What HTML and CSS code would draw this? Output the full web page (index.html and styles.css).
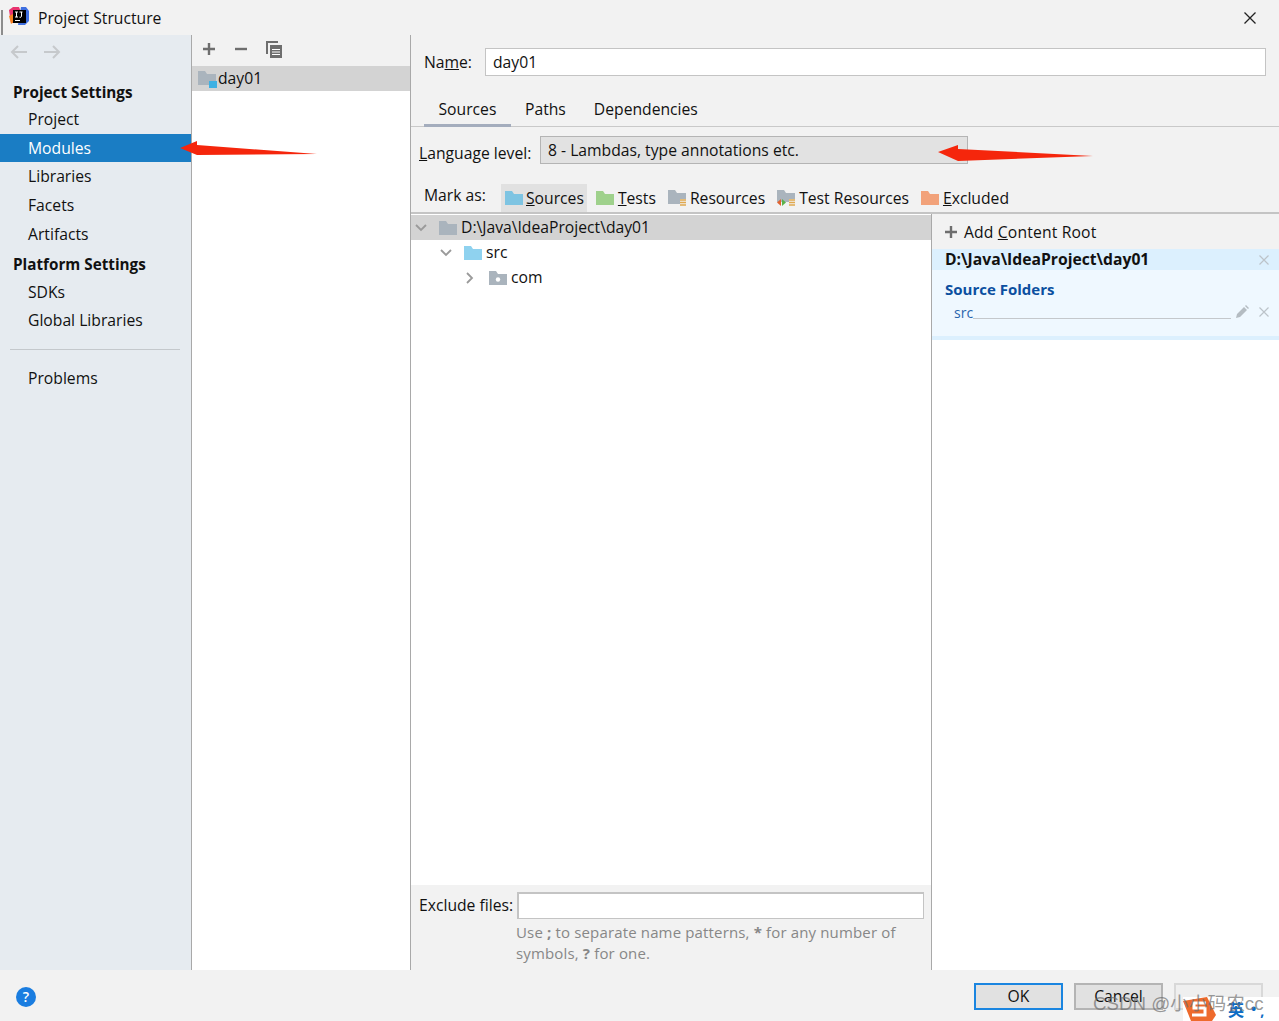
FILE: index.html
```html
<!DOCTYPE html>
<html lang="en">

<head>
  <title>Project Structure</title>
  <link rel="stylesheet" href="styles.css">
</head>

<body>
  <div class="window">

    <header class="titlebar">
      <span class="edge"></span>
      <svg class="logo" width="22" height="22" viewBox="0 0 22 22">
        <path d="M1 4 5 1h6l2 5-6 11H3z" fill="#e8336f" />
        <path d="M1 10l4-2 2 7-4 3z" fill="#f58220" />
        <path d="M13 1h5l3 4v10l-4 4h-7z" fill="#3f6fe0" />
        <rect x="5" y="4" width="13" height="13" fill="#000" />
        <rect x="7" y="14" width="5" height="1" fill="#fff" />
        <path d="M7 6h3M8.500 6v5M7 11h3M11.500 6h3M13.500 6v4.500q0 1-2 .7" fill="none" stroke="#fff" stroke-width="1" />
      </svg>
      <span class="title">Project Structure</span>
      <svg class="close" width="12" height="12" viewBox="0 0 12 12">
        <path d="M.5.500l11 11M11.500.500l-11 11" stroke="#222" stroke-width="1.300" />
      </svg>
    </header>

    <div class="main">

      <nav class="sidebar">
        <div class="history">
          <svg width="18" height="14" viewBox="0 0 18 14">
            <path d="M17 7H2M8 1 2 7l6 6" fill="none" stroke="#c6c9cc" stroke-width="2" />
          </svg>
          <svg width="18" height="14" viewBox="0 0 18 14">
            <path d="M1 7h15M10 1l6 6-6 6" fill="none" stroke="#c6c9cc" stroke-width="2" />
          </svg>
        </div>
        <h3 class="nav-head">Project Settings</h3>
        <a class="nav-item">Project</a>
        <a class="nav-item active">Modules</a>
        <a class="nav-item">Libraries</a>
        <a class="nav-item">Facets</a>
        <a class="nav-item">Artifacts</a>
        <h3 class="nav-head platform">Platform Settings</h3>
        <a class="nav-item short">SDKs</a>
        <a class="nav-item short">Global Libraries</a>
        <hr class="nav-rule">
        <a class="nav-item">Problems</a>
      </nav>

      <section class="modules">
        <div class="toolbar">
          <svg width="14" height="14" viewBox="0 0 14 14">
            <path d="M7 1v12M1 7h12" stroke="#6e6e6e" stroke-width="2.400" />
          </svg>
          <svg width="14" height="14" viewBox="0 0 14 14">
            <path d="M1 7h12" stroke="#6e6e6e" stroke-width="2.400" />
          </svg>
          <svg width="16" height="17" viewBox="0 0 16 17">
            <path d="M1 13V1h11" fill="none" stroke="#6e6e6e" stroke-width="2" />
            <rect x="4" y="4" width="12" height="13" fill="#6e6e6e" />
            <path d="M6 8.500h8M6 11h8M6 13.500h8" stroke="#fff" stroke-width="1" />
          </svg>
        </div>
        <div class="module-row">
          <svg width="20" height="18" viewBox="0 0 20 18">
            <path d="M1 1h7l2 3h9v11H1z" fill="#aab4bd" />
            <rect x="12" y="11" width="8" height="7" fill="#3fb1e3" />
          </svg>
          <span>day01</span>
        </div>
      </section>

      <section class="detail">
        <div class="name-row">
          <label>Na<u>m</u>e:</label>
          <div class="field">day01</div>
        </div>

        <div class="tabs">
          <span class="tab current">Sources</span>
          <span class="tab">Paths</span>
          <span class="tab">Dependencies</span>
        </div>

        <div class="level-row">
          <label><u>L</u>anguage level:</label>
          <div class="combo">8 - Lambdas, type annotations etc.</div>
        </div>

        <div class="mark-row">
          <span class="mark-label">Mark as:</span>
          <span class="mark pressed">
            <svg width="18" height="14" viewBox="0 0 18 14"><path d="M0 0h7l2 3h9v11H0z" fill="#7ec4e2" /></svg>
            <span><u>S</u>ources</span>
          </span>
          <span class="mark">
            <svg width="18" height="14" viewBox="0 0 18 14"><path d="M0 0h7l2 3h9v11H0z" fill="#9fd18c" /></svg>
            <span><u>T</u>ests</span>
          </span>
          <span class="mark">
            <svg width="18" height="18" viewBox="0 0 18 18">
              <path d="M0 1h7l2 3h9v6h-6v5H0z" fill="#aab4bd" />
              <path d="M12 11h6M12 13.500h6M12 16h6" stroke="#e0a94f" stroke-width="1.500" />
            </svg>
            <span>Resources</span>
          </span>
          <span class="mark">
            <svg width="18" height="18" viewBox="0 0 18 18">
              <path d="M0 1h7l2 3h9v6h-6v3H0z" fill="#aab4bd" />
              <path d="M4 10v7l-4-3.500z" fill="#e2622f" />
              <path d="M5 10v7l4-3.500z" fill="#5bb24a" />
              <path d="M12 11h6M12 13.500h6M12 16h6" stroke="#e0a94f" stroke-width="1.500" />
            </svg>
            <span>Test Resources</span>
          </span>
          <span class="mark">
            <svg width="18" height="14" viewBox="0 0 18 14"><path d="M0 0h7l2 3h9v11H0z" fill="#f2a27a" /></svg>
            <span><u>E</u>xcluded</span>
          </span>
        </div>

        <div class="split">
          <div class="tree-pane">
            <ul class="tree">
              <li class="tree-row selected">
                <svg class="chevron" width="12" height="8" viewBox="0 0 12 8"><path d="M1 1l5 5 5-5" fill="none" stroke="#9a9a9a" stroke-width="1.800" /></svg>
                <svg width="18" height="14" viewBox="0 0 18 14"><path d="M0 0h7l2 3h9v11H0z" fill="#aab4bd" /></svg>
                <span>D:\Java\IdeaProject\day01</span>
              </li>
              <li class="tree-row depth1">
                <svg class="chevron" width="12" height="8" viewBox="0 0 12 8"><path d="M1 1l5 5 5-5" fill="none" stroke="#9a9a9a" stroke-width="1.800" /></svg>
                <svg width="18" height="14" viewBox="0 0 18 14"><path d="M0 0h7l2 3h9v11H0z" fill="#8fd2ef" /></svg>
                <span>src</span>
              </li>
              <li class="tree-row depth2">
                <svg class="chevron" width="12" height="12" viewBox="0 0 12 12"><path d="M3 1l5 5-5 5" fill="none" stroke="#9a9a9a" stroke-width="1.800" /></svg>
                <svg width="18" height="14" viewBox="0 0 18 14">
                  <path d="M0 0h7l2 3h9v11H0z" fill="#aab4bd" />
                  <circle cx="9" cy="8.500" r="2.200" fill="#fff" />
                </svg>
                <span>com</span>
              </li>
            </ul>
            <div class="exclude">
              <div class="exclude-row">
                <label>Exclude files:</label>
                <div class="field inset"></div>
              </div>
              <p class="hint">Use <b>;</b> to separate name patterns, <b>*</b> for any number of<br>symbols, <b>?</b> for one.</p>
            </div>
          </div>

          <aside class="roots">
            <div class="add-root">
              <svg width="14" height="14" viewBox="0 0 14 14"><path d="M7 1v12M1 7h12" stroke="#6e6e6e" stroke-width="2.400" /></svg>
              <span>Add <u>C</u>ontent Root</span>
            </div>
            <div class="root-head">
              <span>D:\Java\IdeaProject\day01</span>
              <svg width="10" height="10" viewBox="0 0 10 10"><path d="M.5.500l9 9M9.500.500l-9 9" stroke="#bcc3c9" stroke-width="1.200" /></svg>
            </div>
            <div class="root-body">
              <h4>Source Folders</h4>
              <div class="folder-row">
                <span class="folder-name">src</span>
                <span class="leader"></span>
                <svg width="14" height="14" viewBox="0 0 14 14">
                  <path d="M1 13l1-4 7-7 3 3-7 7zM10 1l1-1 3 3-1 1z" fill="#b4bcc2" />
                </svg>
                <svg width="10" height="10" viewBox="0 0 10 10"><path d="M.5.500l9 9M9.500.500l-9 9" stroke="#bcc3c9" stroke-width="1.200" /></svg>
              </div>
            </div>
          </aside>
        </div>
      </section>
    </div>

    <footer class="footer">
      <span class="help">?</span>
      <div class="actions">
        <button type="button" class="btn primary">OK</button>
        <button type="button" class="btn">Cancel</button>
        <button type="button" class="btn disabled"></button>
      </div>
    </footer>

    <!-- red arrows drawn on top of the screenshot -->
    <svg class="arrow arrow-modules" width="138" height="16" viewBox="0 0 138 16">
      <path d="M0 7 17 0v4l120 9L17 14z" fill="#f5260c" />
    </svg>
    <svg class="arrow arrow-level" width="156" height="17" viewBox="0 0 156 17">
      <path d="M0 7 20 0v4l135 7L20 16z" fill="#f5260c" />
    </svg>

    <!-- watermark + IME badge -->
    <div class="ime">
      <svg width="34" height="24" viewBox="0 0 34 24">
        <path d="M0 4 24 0l9 18-4 6H8z" fill="#ee6a2c" />
        <path d="M23 6H11v5h11v7H9" fill="none" stroke="#fff" stroke-width="3" />
      </svg>
      <span class="ime-lang">英</span>
      <span class="ime-dot">•</span>
      <span class="ime-comma">,</span>
    </div>
    <span class="watermark">CSDN @小小码农cc</span>
  </div>
</body>

</html>
```

FILE: styles.css
```css
* {
  box-sizing: border-box;
}

html,
body {
  margin: 0;
  padding: 0;
}

body {
  font-family: "Open Sans", "Noto Sans", "Noto Sans CJK SC", sans-serif;
  font-size: 15.700px;
  color: #111;
}

svg {
  flex: none;
  display: block;
}

label {
  white-space: nowrap;
}

.window {
  position: relative;
  display: flex;
  flex-flow: column;
  width: 1279px;
  height: 1021px;
  overflow: hidden;
  background-color: #f2f2f2;
}

/* title bar */
.titlebar {
  display: flex;
  align-items: center;
  flex: none;
  height: 35px;
  padding-right: 23px;
}

.edge {
  align-self: flex-end;
  width: 2px;
  height: 25px;
  margin-left: 1px;
  background-color: #8c8c8c;
}

.logo {
  margin-left: 5px;
  margin-top: -1px;
}

.title {
  flex: 1;
  margin-left: 8px;
}

.main {
  display: flex;
  flex: 1;
  min-height: 0;
}

/* left nav */
.sidebar {
  display: flex;
  flex-flow: column;
  flex: none;
  width: 192px;
  border-right: 1px solid #a9a9a9;
  background-color: #e6ebf0;
}

.history {
  display: flex;
  gap: 15px;
  height: 43px;
  padding: 10px 0 0 10px;
}

.nav-head {
  height: 27px;
  margin: 0;
  padding-left: 13px;
  font-size: 15.250px;
  font-weight: 700;
  line-height: 28px;
}

.nav-head.platform {
  height: 28px;
  margin-top: 2px;
}

.nav-item {
  height: 28.700px;
  padding-left: 28px;
  line-height: 28px;
}

.nav-item.short {
  height: 28px;
}

.nav-item.active {
  background-color: #1a7dc4;
  color: #fff;
}

.nav-rule {
  width: 170px;
  margin: 15px 0 14px 10px;
  border: 0;
  border-top: 1px solid #c4c8cc;
}

/* module list */
.modules {
  flex: none;
  width: 219px;
  border-right: 1px solid #a9a9a9;
  background-color: #fff;
}

.toolbar {
  display: flex;
  align-items: center;
  gap: 18px;
  height: 31px;
  padding: 0 0 3px 10px;
  background-color: #f2f2f2;
}

.module-row {
  display: flex;
  align-items: center;
  gap: 1px;
  height: 25px;
  padding-left: 5px;
  background-color: #d3d3d3;
  line-height: 23px;
}

/* detail */
.detail {
  display: flex;
  flex-flow: column;
  flex: 1;
  min-width: 0;
}

.name-row {
  display: flex;
  align-items: center;
  gap: 14px;
  height: 54px;
  padding: 0 13px;
}

.name-row label {
  width: 47px;
}

.field {
  flex: 1;
  height: 28px;
  border: 1px solid #c4c4c4;
  padding-left: 7px;
  background-color: #fff;
  line-height: 26px;
}

.tabs {
  display: flex;
  height: 31px;
  margin-top: 7px;
  padding-left: 13px;
  border-bottom: 1px solid #c9c9c9;
}

.tab {
  height: 31px;
  padding: 0 14px;
  line-height: 26px;
}

.tab.current {
  width: 87px;
  padding: 0 14.500px;
  border-bottom: 3px solid #a4adbd;
}

.level-row {
  display: flex;
  gap: 8px;
  height: 37px;
  padding: 9px 0 0 8px;
}

.level-row label {
  width: 113px;
  margin-top: 3px;
  line-height: 28px;
}

.combo {
  width: 428px;
  height: 28px;
  border: 1px solid #b4b4b4;
  padding-left: 7px;
  background-color: #e2e2e2;
  line-height: 26px;
}

.mark-row {
  display: flex;
  align-items: center;
  height: 50px;
  padding: 20px 0 0 13px;
  border-bottom: 2px solid #c4c4c4;
}

.mark-label {
  width: 77px;
  margin-top: -6px;
}

.mark {
  display: flex;
  align-items: center;
  gap: 4px;
  height: 28px;
  margin-right: 5px;
  padding: 0 3px 0 4px;
  white-space: nowrap;
}

.mark.pressed {
  gap: 3px;
  background-color: #e1e1e1;
}

/* content roots */
.split {
  display: flex;
  flex: 1;
  min-height: 0;
}

.tree-pane {
  display: flex;
  flex-flow: column;
  flex: none;
  width: 521px;
  border-right: 1px solid #a9a9a9;
}

.tree {
  flex: 1;
  margin: 0;
  padding: 1px 0 0;
  list-style-type: '';
  background-color: #fff;
}

.tree-row {
  display: flex;
  align-items: center;
  gap: 4px;
  height: 25px;
  padding-left: 4px;
}

.tree-row span {
  margin-top: -2px;
}

.tree-row .chevron {
  margin-right: 8px;
}

.tree-row.selected {
  background-color: #d3d3d3;
}

.tree-row.depth1 {
  padding-left: 29px;
}

.tree-row.depth2 {
  padding-left: 53px;
}

.tree-row.depth2 .chevron {
  margin-right: 9px;
}

.exclude {
  flex: none;
  height: 85px;
  padding: 7px 7px 0 8px;
}

.exclude-row {
  display: flex;
  align-items: center;
  gap: 6px;
}

.exclude-row label {
  width: 92px;
  margin-top: -1px;
}

.field.inset {
  height: 27px;
  border-width: 2px 1px 1px 2px;
}

.hint {
  width: 400px;
  margin: 3px 0 0 97px;
  color: #878787;
  font-size: 15px;
  letter-spacing: .15px;
  line-height: 21px;
}

.roots {
  flex: 1;
  background-color: #fff;
}

.add-root {
  display: flex;
  align-items: center;
  gap: 6px;
  height: 35px;
  padding-left: 12px;
  background-color: #f2f2f2;
  letter-spacing: .15px;
}

.root-head {
  display: flex;
  justify-content: space-between;
  align-items: center;
  height: 21px;
  padding: 0 10px 0 13px;
  background-color: #dcf0fe;
  font-weight: 700;
}

.root-head span {
  margin-top: -2px;
}

.root-body {
  height: 70px;
  border-bottom: 4px solid #dcf0fe;
  padding: 0 10px 0 13px;
  background-color: #eff8ff;
}

.root-body h4 {
  margin: 0;
  padding-top: 8px;
  color: #0b4fa0;
  font-size: 15px;
  line-height: 22px;
}

.folder-row {
  display: flex;
  align-items: center;
  gap: 4px;
  height: 24px;
  padding-left: 9px;
  color: #2a65ad;
  font-size: 14px;
}

.folder-name {
  margin-right: -4px;
}

.leader {
  flex: 1;
  align-self: flex-end;
  margin-bottom: 5px;
  border-bottom: 1px solid #c4c8cc;
}

.folder-row svg:last-child {
  margin-left: 6px;
}

/* footer */
.footer {
  display: flex;
  justify-content: space-between;
  align-items: center;
  flex: none;
  height: 51px;
  padding: 0 16px;
}

.help {
  display: block;
  width: 20px;
  height: 20px;
  margin-top: 3px;
  border-radius: 50%;
  background-color: #1a7de0;
  color: #fff;
  font-size: 14px;
  font-weight: 600;
  line-height: 20px;
  text-align: center;
}

.actions {
  display: flex;
  gap: 11px;
  padding-top: 1px;
}

.btn {
  width: 89px;
  height: 27px;
  border: 2px solid #b4b4b4;
  padding: 0;
  background-color: #e1e1e1;
  color: #111;
  font: inherit;
  line-height: 22px;
}

.btn.primary {
  border-color: #1a85e0;
}

.btn.disabled {
  border-color: #d8d8d8;
  background-color: #efefef;
}

/* overlays */
.arrow {
  position: absolute;
}

.arrow-modules {
  left: 180px;
  top: 141px;
}

.arrow-level {
  left: 938px;
  top: 145px;
}

.watermark {
  position: absolute;
  left: 1093px;
  top: 988px;
  color: rgb(110 110 110 / 70%);
  font-family: "Liberation Sans", "Noto Sans CJK SC", sans-serif;
  font-size: 18.700px;
  white-space: nowrap;
}

.ime {
  position: absolute;
  left: 1183px;
  top: 997px;
  display: flex;
  align-items: flex-end;
  width: 96px;
  height: 24px;
  background-color: #fff;
}

.ime-lang {
  margin-left: 11px;
  margin-bottom: 2px;
  color: #0d6cc4;
  font-family: "Noto Sans CJK SC", sans-serif;
  font-size: 16px;
  font-weight: 700;
  line-height: 20px;
}

.ime-dot,
.ime-comma {
  color: #0d6cc4;
  font-size: 14px;
  font-weight: 700;
  line-height: 20px;
}

.ime-dot {
  margin-left: 7px;
  align-self: flex-start;
  margin-top: 2px;
}

.ime-comma {
  margin-left: 4px;
}
```
